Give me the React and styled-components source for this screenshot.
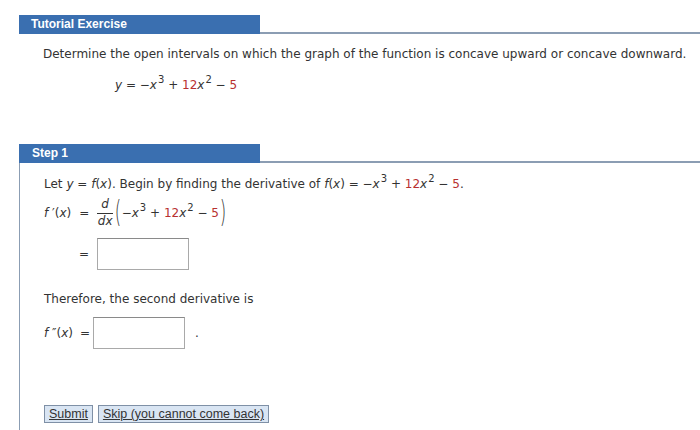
import React from "react";
import styled, { createGlobalStyle } from "styled-components";

const Global = createGlobalStyle`
  html, body { margin: 0; padding: 0; background: #fff; }
  body { font-family: "DejaVu Sans", Verdana, sans-serif; color: #333; font-size: 12px; }
`;

const Page = styled.div`
  width: 700px;
  height: 430px;
  overflow: hidden;
  padding: 15px 0 0 19px;
  box-sizing: border-box;
`;

const HeaderRow = styled.div`
  display: flex;
  align-items: flex-end;
  border-bottom: 2px solid #8b9db3;
  height: 17px;
`;

const HeaderLabel = styled.div`
  width: 241px;
  height: 19px;
  margin-bottom: -2px;
  background: #3a6fb0;
  color: #fff;
  font-family: "Liberation Sans", Arial, sans-serif;
  font-weight: bold;
  font-size: 12px;
  line-height: 18px;
  padding-left: ${(p) => p.$pad || 12}px;
  box-sizing: border-box;
`;

const Intro = styled.div`
  padding: 12px 0 0 24px;
`;

const Line = styled.div`
  height: 16px;
  line-height: 16px;
  white-space: nowrap;
  margin-top: ${(p) => p.$mt || 0}px;
  padding-left: ${(p) => p.$pl || 0}px;
`;

const I = styled.i`
  font-style: italic;
`;

const Red = styled.span`
  color: #b83030;
`;

const Sup = styled.sup`
  font-size: 10px;
  vertical-align: 6px;
  line-height: 0;
  margin-left: 1px;
`;

const StepBox = styled.div`
  margin-top: 51px;
`;

const StepBody = styled.div`
  border-left: 1px solid #8b9db3;
  height: 300px;
  padding: 13px 0 0 24px;
  box-sizing: border-box;
`;

const MathRow = styled.div`
  display: flex;
  align-items: center;
  white-space: nowrap;
  margin-top: ${(p) => p.$mt || 0}px;
  padding-left: ${(p) => p.$pl || 0}px;
`;

const Eq = styled.span`
  margin: 0 8px;
`;

const Frac = styled.span`
  display: inline-flex;
  flex-direction: column;
  align-items: center;
  font-style: italic;
  font-size: 12px;
  line-height: 15px;
  margin-right: 1px;
`;

const Num = styled.span`
  padding: 0 4px 1px;
  border-bottom: 1px solid #333;
`;

const Paren = styled.span`
  font-family: "DejaVu Sans", sans-serif;
  font-size: 30px;
  line-height: 30px;
  font-weight: 200;
  transform: scaleX(0.55);
  display: inline-block;
  margin: -3px -2px 0;
`;

const Box = styled.div`
  width: 92px;
  height: 32px;
  box-sizing: border-box;
  border: 1px solid #a9a9a9;
  border-top-color: #8a8a8a;
  background: #fff;
`;

const Dot = styled.span`
  margin-left: 10px;
`;

const Buttons = styled.div`
  display: flex;
  gap: 5px;
  margin-top: 56px;
`;

const Btn = styled.button`
  font-family: "Liberation Sans", Arial, sans-serif;
  font-size: 12.5px;
  color: #333;
  text-decoration: underline;
  background: #d9e5f3;
  border: 1px solid #7f90a6;
  height: 18px;
  padding: 0 4px;
  line-height: 16px;
  margin: 0;
`;

export default function App() {
  return (
    <>
      <Global />
      <Page>
        <HeaderRow>
          <HeaderLabel>Tutorial Exercise</HeaderLabel>
        </HeaderRow>
        <Intro>
          <Line>
            Determine the open intervals on which the graph of the function is
            concave upward or concave downward.
          </Line>
          <Line $mt={15} $pl={72}>
            <I>y</I> = −<I>x</I>
            <Sup>3</Sup> + <Red>12</Red>
            <I>x</I>
            <Sup>2</Sup> − <Red>5</Red>
          </Line>
        </Intro>
        <StepBox>
          <HeaderRow>
            <HeaderLabel $pad={13}>Step 1</HeaderLabel>
          </HeaderRow>
          <StepBody>
            <Line>
              Let <I>y</I> = <I>f</I>(<I>x</I>). Begin by finding the derivative
              of <I>f</I>(<I>x</I>) = −<I>x</I>
              <Sup>3</Sup> + <Red>12</Red>
              <I>x</I>
              <Sup>2</Sup> − <Red>5</Red>.
            </Line>
            <MathRow $mt={5}>
              <span>
                <I>f</I> ′(<I>x</I>)
              </span>
              <Eq>=</Eq>
              <Frac>
                <Num>d</Num>
                <span>dx</span>
              </Frac>
              <Paren>(</Paren>
              <span>
                −<I>x</I>
                <Sup>3</Sup> + <Red>12</Red>
                <I>x</I>
                <Sup>2</Sup> − <Red>5</Red>
              </span>
              <Paren>)</Paren>
            </MathRow>
            <MathRow $mt={9} $pl={35}>
              <Eq style={{ margin: "0 8px 0 0" }}>=</Eq>
              <Box />
            </MathRow>
            <Line $mt={21}>Therefore, the second derivative is</Line>
            <MathRow $mt={10}>
              <span>
                <I>f</I> ″(<I>x</I>)
              </span>
              <Eq style={{ margin: "0 3px 0 7px" }}>=</Eq>
              <Box />
              <Dot>.</Dot>
            </MathRow>
            <Buttons>
              <Btn>Submit</Btn>
              <Btn>Skip (you cannot come back)</Btn>
            </Buttons>
          </StepBody>
        </StepBox>
      </Page>
    </>
  );
}
